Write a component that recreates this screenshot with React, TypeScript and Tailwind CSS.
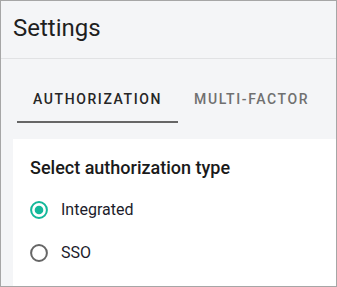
import { useState } from 'react'

const tabs = ['Authorization', 'Multi-factor']
const options = ['Integrated', 'SSO']

function RadioIcon({ checked }: { checked: boolean }) {
  return (
    <svg width="18" height="18" viewBox="0 0 18 18" className="shrink-0">
      <circle cx="9" cy="9" r="7.9" fill="none" stroke={checked ? '#13b89a' : '#666666'} strokeWidth="2" />
      {checked ? <circle cx="9" cy="9" r="4.3" fill="#13b89a" /> : null}
    </svg>
  )
}

export default function App() {
  const [tab, setTab] = useState(0)
  const [authType, setAuthType] = useState('Integrated')

  return (
    <div className="flex h-[287px] w-[337px] flex-col border border-[#a6a6a6] bg-[#f4f5f7] font-['Roboto',sans-serif]">
      <header className="h-[58px] border-b border-[#e1e2e4] pl-3 pt-[13px]">
        <h1 className="text-[24px] leading-[28px] text-[#1f1f1f]">Settings</h1>
      </header>

      <div className="flex pl-4 pt-4">
        {tabs.map((t, i) => (
          <button
            key={t}
            type="button"
            onClick={() => setTab(i)}
            className={
              i === tab
                ? 'h-12 border-b-2 border-[#666666] px-4 pt-[2px] text-[14px] font-medium uppercase tracking-[1.6px] text-[#262626]'
                : 'h-12 border-b-2 border-transparent px-4 pt-[2px] text-[14px] font-medium uppercase tracking-[1.6px] text-[#707070]'
            }
          >
            {t}
          </button>
        ))}
      </div>

      <section className="ml-3 mt-4 flex-1 bg-white pl-[17px] pt-[17px]">
        <h2 className="text-[18px] font-medium leading-6 text-[#1a1a1a]">Select authorization type</h2>
        <div className="mt-2 flex flex-col">
          {options.map((o) => (
            <label key={o} className="flex h-[43px] cursor-pointer items-center gap-[13px]" onClick={() => setAuthType(o)}>
              <RadioIcon checked={authType === o} />
              <span className="text-[16px] leading-6 text-[#1c1c2b]">{o}</span>
            </label>
          ))}
        </div>
      </section>
    </div>
  )
}
